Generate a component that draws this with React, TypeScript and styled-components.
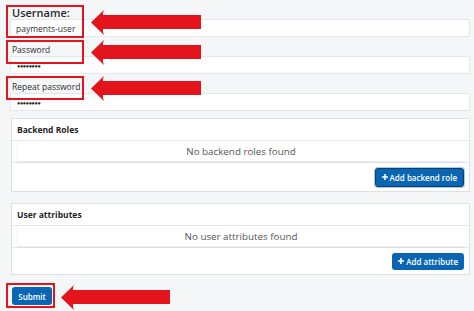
import React from 'react';
import styled, { createGlobalStyle } from 'styled-components';

const GlobalStyle = createGlobalStyle`
  html, body {
    margin: 0;
    padding: 0;
    background: #f5f6f8;
    font-family: "Open Sans", "Liberation Sans", sans-serif;
    color: #333;
  }
`;

const RED = '#e3141b';
const BLUE = '#0a66b2';

const Page = styled.div`
  width: 460px;
  padding: 0 4px 0 10px;
  display: flex;
  flex-direction: column;
`;

const Field = styled.div<{ $first?: boolean; $labelSize: number; $labelHeight: number }>`
  position: relative;
  display: flex;
  flex-direction: column;
  padding-top: ${p => (p.$first ? 6 : 7)}px;

  label {
    display: block;
    font-size: ${p => p.$labelSize}px;
    line-height: ${p => p.$labelHeight}px;
    font-weight: ${p => (p.$first ? 600 : 400)};
    padding-left: 2px;
    color: #2b2b2b;
  }
`;

const Input = styled.div`
  height: 18px;
  box-sizing: border-box;
  background: #fff;
  border: 1px solid #e3e6ea;
  display: flex;
  align-items: center;
  padding-left: 5px;
  font-size: 8.5px;
  color: #333;
`;

const Dots = styled.span`
  font-size: 5.5px;
  letter-spacing: -0.4px;
  color: #222;
  padding-top: 1px;
  padding-left: 1px;
`;

const Highlight = styled.div<{ $top: number; $left: number; $w: number; $h: number }>`
  position: absolute;
  top: ${p => p.$top}px;
  left: ${p => p.$left}px;
  width: ${p => p.$w}px;
  height: ${p => p.$h}px;
  box-sizing: border-box;
  border: 2px solid ${RED};
  pointer-events: none;
`;

const ArrowWrap = styled.svg<{ $top: number; $left: number }>`
  position: absolute;
  top: ${p => p.$top}px;
  left: ${p => p.$left}px;
  overflow: visible;
`;

const Arrow = ({ top, left, length }: { top: number; left: number; length: number }) => (
  <ArrowWrap $top={top} $left={left} width={length} height={25} viewBox={`0 0 ${length} 25`}>
    <path
      d={`M0 12.5 L13 0 Q11.5 3 12 5 L${length} 5 L${length} 19 L12 19 Q11.5 22 13 25 Z`}
      fill={RED}
    />
  </ArrowWrap>
);

const Panel = styled.div<{ $mt: number }>`
  margin-top: ${p => p.$mt}px;
  margin-left: 1px;
  background: #fff;
  border: 1px solid #dde1e6;
  display: flex;
  flex-direction: column;
`;

const PanelHeader = styled.div`
  height: 21px;
  display: flex;
  align-items: center;
  padding-left: 5px;
  font-size: 8.5px;
  font-weight: 700;
  color: #1f1f1f;
  border-bottom: 1px solid #e4e7eb;
`;

const PanelBody = styled.div`
  padding: 0 5px 0 5px;
  border-bottom: 1px solid #e4e7eb;
`;

const EmptyRow = styled.div`
  height: 20px;
  display: flex;
  align-items: center;
  justify-content: center;
  font-size: 9.8px;
  color: #555;
  border-bottom: 1px solid #eceef1;
  border-left: 1px solid #f1f2f4;
  box-shadow: 0 1px 1px rgba(0, 0, 0, 0.03);
`;

const PanelFooter = styled.div<{ $h: number }>`
  height: ${p => p.$h}px;
  display: flex;
  align-items: center;
  justify-content: flex-end;
  padding-right: 5px;
`;

const Button = styled.button<{ $focused?: boolean }>`
  height: ${p => (p.$focused ? 19 : 17)}px;
  box-sizing: border-box;
  display: inline-flex;
  align-items: center;
  gap: 2px;
  padding: 0 6px;
  background: ${BLUE};
  color: #fff;
  border: ${p => (p.$focused ? '1px solid #0b3f6e' : 'none')};
  border-radius: 3px;
  box-shadow: ${p => (p.$focused ? '0 0 0 1px rgba(10, 102, 178, 0.35)' : 'none')};
  font-family: "Open Sans", "Liberation Sans", sans-serif;
  font-size: 8px;
  font-weight: 600;
  cursor: pointer;
`;

const SubmitRow = styled.div`
  position: relative;
  margin-top: 12px;
  padding-left: 2px;
  height: 24px;
  display: flex;
  align-items: flex-start;

  ${Button} {
    height: 18px;
    width: 40px;
    justify-content: center;
    padding: 0;
  }
`;

const Plus = () => (
  <svg width="6" height="6" viewBox="0 0 6 6">
    <path d="M2.2 0h1.6v2.2H6v1.6H3.8V6H2.2V3.8H0V2.2h2.2z" fill="#fff" />
  </svg>
);

export default function App() {
  return (
    <>
      <GlobalStyle />
      <Page>
        <Field $first $labelSize={11} $labelHeight={13}>
          <label>Username:</label>
          <Input>payments-user</Input>
          <Highlight $top={5} $left={-4} $w={78} $h={33} />
          <Arrow top={10} left={81} length={110} />
        </Field>

        <Field $labelSize={8.5} $labelHeight={12}>
          <label>Password</label>
          <Input>
            <Dots>●●●●●●●●</Dots>
          </Input>
          <Highlight $top={3} $left={-4} $w={78} $h={24} />
          <Arrow top={3} left={81} length={110} />
        </Field>

        <Field $labelSize={8.5} $labelHeight={12}>
          <label>Repeat password</label>
          <Input>
            <Dots>●●●●●●●●</Dots>
          </Input>
          <Highlight $top={2} $left={-4} $w={78} $h={24} />
          <Arrow top={2} left={81} length={110} />
        </Field>

        <Panel $mt={7}>
          <PanelHeader>Backend Roles</PanelHeader>
          <PanelBody>
            <EmptyRow>No backend roles found</EmptyRow>
          </PanelBody>
          <PanelFooter $h={28}>
            <Button $focused>
              <Plus />
              Add backend role
            </Button>
          </PanelFooter>
        </Panel>

        <Panel $mt={11}>
          <PanelHeader>User attributes</PanelHeader>
          <PanelBody>
            <EmptyRow>No user attributes found</EmptyRow>
          </PanelBody>
          <PanelFooter $h={26}>
            <Button>
              <Plus />
              Add attribute
            </Button>
          </PanelFooter>
        </Panel>

        <SubmitRow>
          <Button>Submit</Button>
          <Highlight $top={-4} $left={-4} $w={49} $h={25} />
          <Arrow top={-2} left={51} length={109} />
        </SubmitRow>
      </Page>
    </>
  );
}
